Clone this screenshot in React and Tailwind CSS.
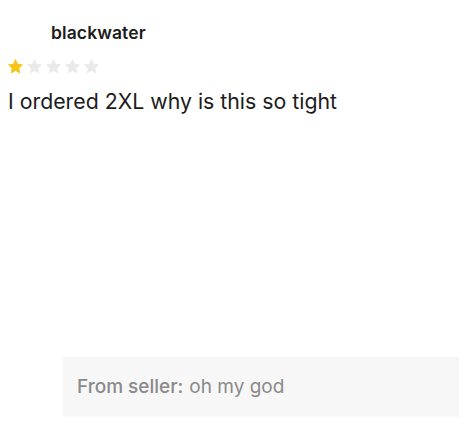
export default function App() {
  const Star = ({ filled }) => (
    <svg width="17" height="17" viewBox="0 0 24 24">
      <path
        d="M12 1l3.3 7 7.6 1-5.6 5.3 1.5 7.6L12 18.2l-6.8 3.7 1.5-7.6L1.1 9l7.6-1z"
        fill={filled ? "#f5c518" : "#eaeaea"}
      />
    </svg>
  );
  return (
    <div
      className="w-[474px] h-[435px] bg-white relative overflow-hidden"
      style={{ fontFamily: "Inter, 'Noto Sans', sans-serif" }}
    >
      <div className="pl-[51px] pt-[23px] text-[17.5px] leading-[20px] font-semibold text-[#1c1c1c] tracking-[0.1px]">
        blackwater
      </div>
      <div className="flex gap-[2px] pl-[7px] mt-[15px]">
        <Star filled />
        <Star />
        <Star />
        <Star />
        <Star />
      </div>
      <div className="pl-[8px] mt-[13px] text-[21.3px] leading-[26px] text-[#1c1c1c]">
        I ordered 2XL why is this so tight
      </div>
      <div className="ml-[63px] mt-[243px] w-[396px] h-[60px] bg-[#f7f7f7] flex items-center pl-[14px] text-[19px] text-[#8a8a8a]">
        <span className="font-medium">From seller:</span>
        <span className="ml-[6px]">oh my god</span>
      </div>
    </div>
  );
}
